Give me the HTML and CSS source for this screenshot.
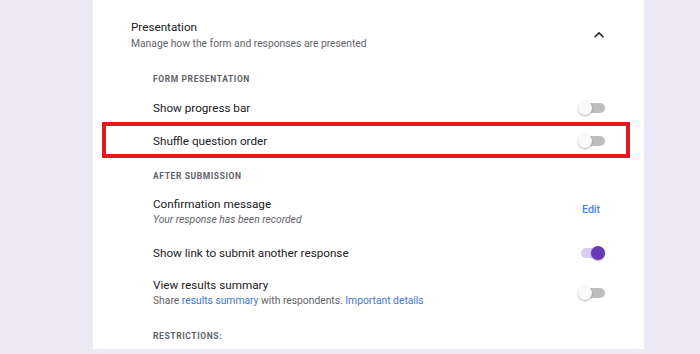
FILE: index.html
```html
<!DOCTYPE html>
<html lang="en">
<head>
  <meta charset="UTF-8">
  <link rel="stylesheet" href="styles.css">
</head>
<body>
  <div class="card">
    <div class="head">
      <div>
        <div class="title">Presentation</div>
        <div class="sub">Manage how the form and responses are presented</div>
      </div>
      <svg class="chevron" width="20" height="20" viewBox="0 0 24 24">
        <path d="M7.41 15.41 12 10.83l4.59 4.58L18 14l-6-6-6 6z" fill="#202124"/>
      </svg>
    </div>

    <div class="group">
      <div class="label first">Form presentation</div>
      <div class="row">
        <span class="name">Show progress bar</span>
        <span class="toggle"><span class="track"></span><span class="thumb"></span></span>
      </div>
      <div class="row marked">
        <span class="name">Shuffle question order</span>
        <span class="toggle"><span class="track"></span><span class="thumb"></span></span>
      </div>

      <div class="label">After submission</div>
      <div class="row tall">
        <div>
          <div class="name">Confirmation message</div>
          <div class="hint"><i>Your response has been recorded</i></div>
        </div>
        <a class="edit">Edit</a>
      </div>
      <div class="row">
        <span class="name">Show link to submit another response</span>
        <span class="toggle on"><span class="track"></span><span class="thumb"></span></span>
      </div>
      <div class="row tall">
        <div>
          <div class="name">View results summary</div>
          <div class="hint">Share <a>results summary</a> with respondents. <a>Important details</a></div>
        </div>
        <span class="toggle"><span class="track"></span><span class="thumb"></span></span>
      </div>

      <div class="label last">Restrictions:</div>
    </div>
  </div>
</body>
</html>
```

FILE: styles.css
```css
html, body {
  margin: 0;
  background: #ede8f6;
  font-family: Roboto, "Liberation Sans", sans-serif;
  color: #202124;
}

.card {
  margin-left: 93px;
  width: 551px;
  height: 349px;
  background: #fff;
  box-sizing: border-box;
  padding: 19px 39px 0 38px;
  overflow: hidden;
}

.head {
  display: flex;
  justify-content: space-between;
  align-items: center;
}

.title {
  font-size: 11.7px;
  line-height: 16px;
}

.sub {
  margin-top: 2px;
  font-size: 10.3px;
  line-height: 14px;
  color: #5f6368;
}

.chevron {
  margin-right: -4px;
}

.group {
  padding-left: 22px;
}

.label {
  font-size: 8.5px;
  font-weight: bold;
  letter-spacing: 0.6px;
  text-transform: uppercase;
  color: #5f6368;
  line-height: 12px;
  margin-top: 13px;
  margin-bottom: 6px;
}

.label.first {
  margin-top: 22px;
}

.label.last {
  margin-top: 13px;
}

.row {
  display: flex;
  justify-content: space-between;
  align-items: center;
  height: 33px;
  position: relative;
}

.row.tall {
  height: 48px;
}

.name {
  font-size: 11.7px;
  line-height: 16px;
}

.tall .name {
  margin-top: -2px;
}

.hint {
  margin-top: 1px;
  font-size: 10.3px;
  line-height: 14px;
  color: #5f6368;
}

.hint a {
  color: #3f75d8;
}

.edit {
  color: #4285f4;
  font-size: 10.5px;
  font-weight: 500;
  margin-right: 5px;
  margin-bottom: 6px;
}

.marked::after {
  content: "";
  position: absolute;
  left: -51px;
  right: -25px;
  top: -2px;
  bottom: -1px;
  border: 4px solid #e3191f;
}

.toggle {
  position: relative;
  width: 27px;
  height: 14px;
  flex: none;
}

.toggle .track {
  position: absolute;
  left: 3px;
  right: 0;
  top: 2px;
  height: 10px;
  border-radius: 5px;
  background: #bdbdbd;
}

.toggle .thumb {
  position: absolute;
  left: 0;
  top: 0;
  width: 14px;
  height: 14px;
  border-radius: 50%;
  background: #fafafa;
  box-shadow: 0 1px 2px rgba(0, 0, 0, 0.3);
}

.toggle.on .track {
  background: #d8cdee;
}

.toggle.on .thumb {
  left: auto;
  right: 0;
  background: #673ab7;
}
```
